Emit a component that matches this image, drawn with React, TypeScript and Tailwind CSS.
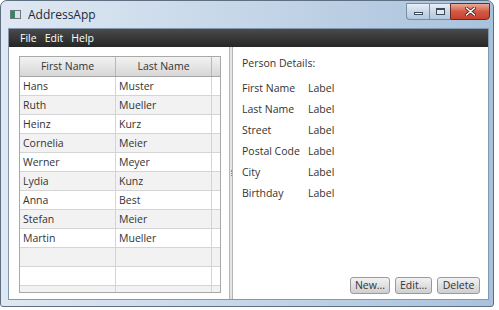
import React from 'react'

const people = [
  ['Hans', 'Muster'],
  ['Ruth', 'Mueller'],
  ['Heinz', 'Kurz'],
  ['Cornelia', 'Meier'],
  ['Werner', 'Meyer'],
  ['Lydia', 'Kunz'],
  ['Anna', 'Best'],
  ['Stefan', 'Meier'],
  ['Martin', 'Mueller'],
  ['', ''],
  ['', ''],
]

const fields = ['First Name', 'Last Name', 'Street', 'Postal Code', 'City', 'Birthday']

function WindowButtons() {
  return (
    <div className="flex self-start mt-[2px] h-[17px]">
      <div className="w-[23px] h-full flex items-center justify-center rounded-bl-[4px] border border-[#7a8ea4] border-r-0 bg-gradient-to-b from-[#e8eff7] via-[#c9d8e8] to-[#b4c8de]">
        <div className="w-[9px] h-[3px] border border-[#3c4a5a] bg-white mt-[4px]"></div>
      </div>
      <div className="w-[21px] h-full flex items-center justify-center border border-[#7a8ea4] border-r-0 bg-gradient-to-b from-[#e8eff7] via-[#c9d8e8] to-[#b4c8de]">
        <div className="w-[9px] h-[7px] border border-[#3c4a5a] border-t-2 bg-[#dfe8f2]"></div>
      </div>
      <div className="w-[40px] h-full flex items-center justify-center rounded-br-[4px] border border-[#6b2a22] bg-gradient-to-b from-[#e9a99a] via-[#d25a45] to-[#c8412c]">
        <svg width="11" height="9" viewBox="0 0 11 9">
          <path d="M1.5 1 L9.5 8 M9.5 1 L1.5 8" stroke="#4a1a14" strokeWidth="3" strokeLinecap="round" />
          <path d="M1.5 1 L9.5 8 M9.5 1 L1.5 8" stroke="#fff" strokeWidth="1.6" strokeLinecap="round" />
        </svg>
      </div>
    </div>
  )
}

function PersonTable() {
  return (
    <div className="w-[202px] h-[237px] border border-[#a8a8a8] bg-white overflow-hidden flex flex-col">
      <div className="flex h-[20px] shrink-0 border-b border-[#a5a5a5] bg-gradient-to-b from-[#f3f3f3] to-[#d6d6d6] text-[#333]">
        <div className="w-[96px] flex items-center justify-center border-r border-[#b8b8b8]">First Name</div>
        <div className="w-[96px] flex items-center justify-center border-r border-[#b8b8b8]">Last Name</div>
        <div className="flex-1"></div>
      </div>
      {people.concat([['', '']]).map(([first, last], i) => (
        <div
          key={i}
          className={`flex h-[19px] shrink-0 border-b border-[#d4d4d4] text-[#333] ${i % 2 === 1 ? 'bg-[#f2f2f2]' : 'bg-white'}`}
        >
          <div className="w-[96px] flex items-center pl-[3px] border-r border-[#d4d4d4]">{first}</div>
          <div className="w-[96px] flex items-center pl-[3px] border-r border-[#d4d4d4]">{last}</div>
          <div className="flex-1"></div>
        </div>
      ))}
    </div>
  )
}

function Btn({ label, w }: { label: string; w: string }) {
  return (
    <div className={`${w} h-[17px] flex items-center justify-center rounded-[3px] border border-[#9a9a9a] bg-gradient-to-b from-[#f2f2f2] to-[#cfcfcf] text-[#333]`}>
      {label}
    </div>
  )
}

export default function App() {
  return (
    <div
      className="w-[499px] h-[310px] bg-white text-[10.5px] leading-none"
      style={{ fontFamily: '"Open Sans", "Noto Sans", sans-serif' }}
    >
      <div className="w-[494px] h-[307px] rounded-t-[7px] rounded-b-[3px] border border-[#5e6f82] bg-gradient-to-r from-[#dfe8f2] via-[#c5d6e8] to-[#a9c2dc] flex flex-col">
        <div className="h-[27px] shrink-0 flex items-center pl-[9px] pr-[3px]">
          <div className="w-[11px] h-[9px] border border-[#6b7785] bg-[#d8e0e8] flex mr-[7px]">
            <div className="w-[4px] h-full bg-[#2f8a5a]"></div>
          </div>
          <span className="text-[12px] text-[#1c2a3a] flex-1">AddressApp</span>
          <WindowButtons />
        </div>
        <div className="flex-1 flex flex-col ml-[7px] mr-[4px] mb-[6px] border border-[#8298b0] bg-white">
          <div className="h-[18px] shrink-0 flex items-center gap-[8px] pl-[11px] bg-gradient-to-b from-[#4a4a4a] to-[#262626] text-white">
            <span>File</span>
            <span>Edit</span>
            <span>Help</span>
          </div>
          <div className="flex-1 flex">
            <div className="w-[220px] pl-[10px] pt-[9px] bg-white">
              <PersonTable />
            </div>
            <div className="w-[4px] border-l border-r border-[#b5b5b5] bg-[#e4e4e4] flex items-center justify-center">
              <div className="w-[1px] h-[6px] border-l border-dotted border-[#888]"></div>
            </div>
            <div className="flex-1 flex flex-col pl-[9px] pr-[8px] pt-[11px] pb-[5px] text-[#333]">
              <div>Person Details:</div>
              <div className="grid grid-cols-[66px_1fr] auto-rows-[21px] items-center mt-[9px]">
                {fields.map((f) => (
                  <React.Fragment key={f}>
                    <div>{f}</div>
                    <div>Label</div>
                  </React.Fragment>
                ))}
              </div>
              <div className="flex-1"></div>
              <div className="flex justify-end gap-[5px]">
                <Btn label="New..." w="w-[40px]" />
                <Btn label="Edit..." w="w-[37px]" />
                <Btn label="Delete" w="w-[43px]" />
              </div>
            </div>
          </div>
        </div>
      </div>
    </div>
  )
}
